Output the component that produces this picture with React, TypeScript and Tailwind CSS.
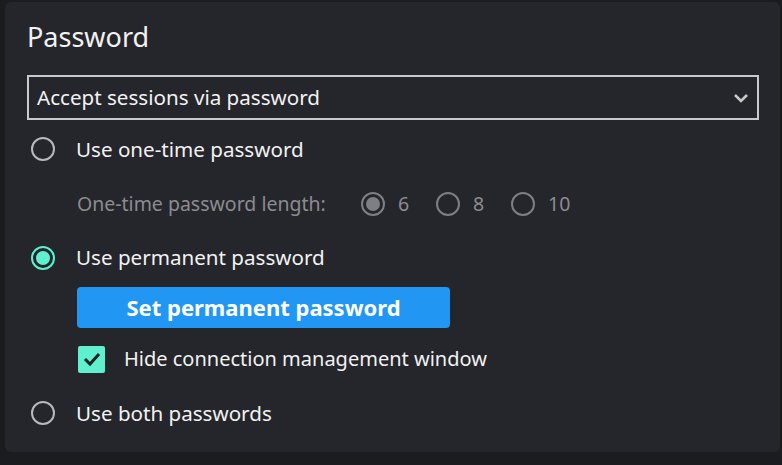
import React from "react";

function Radio({ checked, color, muted }: { checked?: boolean; color?: string; muted?: boolean }) {
  const ring = checked && color ? "border-[#5ff0cf]" : muted ? "border-[#7e7f83]" : "border-[#b9b9bb]";
  const dot = checked && color ? "bg-[#5ff0cf]" : "bg-[#7e7f83]";
  return (
    <span className={`flex h-[24px] w-[24px] shrink-0 items-center justify-center rounded-full border-[2px] ${ring}`}>
      {checked && <span className={`h-[14px] w-[14px] rounded-full ${dot}`} />}
    </span>
  );
}

function LengthOption({ label, checked }: { label: string; checked?: boolean }) {
  return (
    <div className="flex w-[75px] items-center gap-[13px]">
      <Radio checked={checked} muted />
      <span>{label}</span>
    </div>
  );
}

export default function App() {
  return (
    <div
      className="min-h-screen bg-[#1b1c20] pl-[5px] pr-[2px] pt-[2px] text-white"
      style={{ fontFamily: '"Noto Sans", "Open Sans", sans-serif' }}
    >
      <div className="h-[450px] rounded-md bg-[#25262b] pl-[22px] pr-[21px] pt-[16px]">
        <h1 className="text-[27px] leading-[38px] text-[#f2f2f2]">Password</h1>

        <div className="mt-[19px] flex h-[45px] items-center justify-between border-[2px] border-[#c9c9cb] pl-[8px] pr-[8px]">
          <span className="text-[20.6px] text-[#f2f2f2]">Accept sessions via password</span>
          <svg width="16" height="12" viewBox="0 0 16 12" className="mt-[1px]">
            <path d="M2 3 L8 9 L14 3" fill="none" stroke="#c9c9cb" strokeWidth="2.6" />
          </svg>
        </div>

        <div className="mt-[14px] flex items-center gap-[21px] pl-[4px]">
          <Radio />
          <span className="text-[20.6px] text-[#f2f2f2]">Use one-time password</span>
        </div>

        <div className="mt-[24px] flex items-center pl-[50px] text-[19.5px] text-[#8b8c8f]">
          <span className="w-[284px]">One-time password length:</span>
          <LengthOption label="6" checked />
          <LengthOption label="8" />
          <LengthOption label="10" />
        </div>

        <div className="mt-[24px] flex items-center gap-[21px] pl-[4px]">
          <Radio checked color="teal" />
          <span className="text-[20.6px] text-[#f2f2f2]">Use permanent password</span>
        </div>

        <div className="pl-[50px]">
          <button className="mt-[14px] flex h-[41px] w-[373px] items-center justify-center rounded-[4px] bg-[#2196f3] text-[22px] font-bold text-white">
            Set permanent password
          </button>

          <div className="mt-[16px] flex items-center gap-[19px] pl-[1px]">
            <span className="flex h-[27px] w-[27px] items-center justify-center rounded-[2px] bg-[#5ff0cf]">
              <svg width="20" height="16" viewBox="0 0 20 16">
                <path d="M3 8 L8 13 L17 3" fill="none" stroke="#1f2024" strokeWidth="3" />
              </svg>
            </span>
            <span className="text-[20px] text-[#f2f2f2]">Hide connection management window</span>
          </div>
        </div>

        <div className="mt-[24px] flex items-center gap-[21px] pl-[4px]">
          <Radio />
          <span className="text-[20.6px] text-[#f2f2f2]">Use both passwords</span>
        </div>
      </div>
    </div>
  );
}
